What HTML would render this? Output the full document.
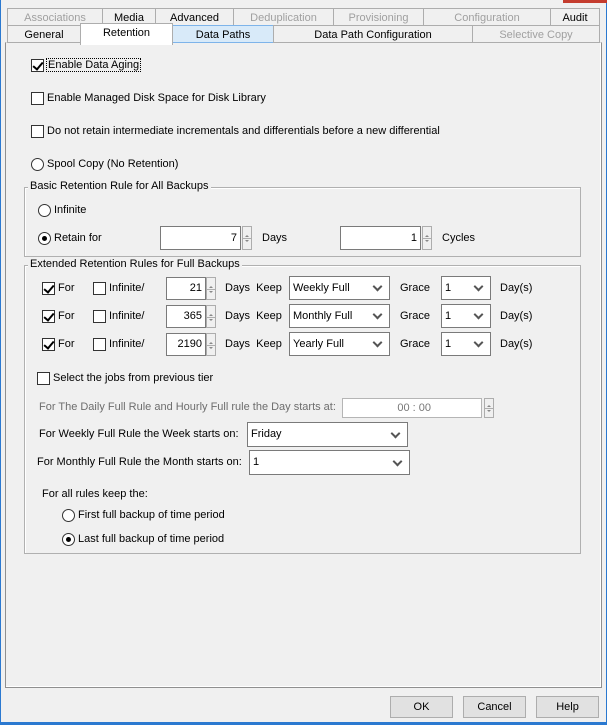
<!DOCTYPE html>
<html><head><style>
*{box-sizing:border-box;margin:0;padding:0}
body{width:607px;height:725px;background:#f0f0f0;font:11px "Liberation Sans",sans-serif;color:#000;position:relative;overflow:hidden}
.a{position:absolute;white-space:nowrap}
.tab{position:absolute;border:1px solid #adadad;background:#f0f0f0;text-align:center;height:19px;line-height:18px;font-size:11px}
.dis{color:#a0a0a0}
.cb{position:absolute;width:13px;height:13px;border:1px solid #333;background:#fff}
.cb.on::after{content:"";position:absolute;left:3px;top:0px;width:4px;height:8px;border:solid #000;border-width:0 2px 2px 0;transform:rotate(40deg)}
.rb{position:absolute;width:13px;height:13px;border:1px solid #333;border-radius:50%;background:#fff}
.rb.on::after{content:"";position:absolute;left:3px;top:3px;width:5px;height:5px;border-radius:50%;background:#000}
.box{position:absolute;border:1px solid #7a7a7a;background:#fff;text-align:right;padding-right:3px}
.sp{position:absolute;width:10px;border:1px solid #adadad;background:#f0f0f0}
.sp::before{content:"";position:absolute;left:50%;top:50%;width:0;height:0;margin-left:-2px;margin-top:-5px;border:2px solid transparent;border-bottom:2px solid #888}
.sp::after{content:"";position:absolute;left:50%;top:50%;width:0;height:0;margin-left:-2px;margin-top:2px;border:2px solid transparent;border-top:2px solid #888}
.sp i{position:absolute;left:0;right:0;top:50%;border-top:1px solid #adadad}
.cmb{position:absolute;border:1px solid #7a7a7a;background:#fff;padding-left:3px}
.cmb::after{content:"";position:absolute;right:8px;top:50%;margin-top:-5px;width:5px;height:5px;border:solid #555;border-width:0 2px 2px 0;transform:rotate(45deg)}
.grp{position:absolute;border:1px solid #b0b0b0;box-shadow:1px 1px 0 #fff inset}
.gt{position:absolute;background:#f0f0f0;padding:0 2px}
.btn{position:absolute;border:1px solid #adadad;background:#e1e1e1;text-align:center;height:22px;line-height:20px}
</style></head><body>
<div class="a" style="left:0;top:0;width:1px;height:725px;background:#2b79d0"></div>
<div class="a" style="left:0;top:722px;width:607px;height:3px;background:#2b79d0"></div>
<div class="a" style="right:0;top:0;width:1px;height:725px;background:#2b79d0"></div>
<div class="a" style="left:563px;top:0;width:44px;height:3px;background:#c43c2e"></div>
<div class="a" style="left:5px;top:42px;width:597px;height:646px;border:1px solid #8f8f8f;border-top-color:#d8d8d8;box-shadow:-1px -1px 0 #fff inset"></div>
<div class="tab dis" style="left:7px;top:8px;width:96px">Associations</div>
<div class="tab" style="left:102px;top:8px;width:54px">Media</div>
<div class="tab" style="left:155px;top:8px;width:79px">Advanced</div>
<div class="tab dis" style="left:233px;top:8px;width:101px">Deduplication</div>
<div class="tab dis" style="left:333px;top:8px;width:91px">Provisioning</div>
<div class="tab dis" style="left:423px;top:8px;width:128px">Configuration</div>
<div class="tab" style="left:550px;top:8px;width:50px">Audit</div>
<div class="tab" style="left:7px;top:25px;width:74px;height:18px">General</div>
<div class="tab" style="left:172px;top:25px;width:102px;height:18px;background:#d8eaf9;border-color:#7eb4ea">Data Paths</div>
<div class="tab" style="left:273px;top:25px;width:200px;height:18px">Data Path Configuration</div>
<div class="tab dis" style="left:472px;top:25px;width:128px;height:18px">Selective Copy</div>
<div class="tab" style="left:80px;top:23px;width:93px;height:22px;background:#fff;border-bottom:none;line-height:18px">Retention</div>

<div class="cb on" style="left:31px;top:59px"></div><div class="a" style="left:46px;top:58px;border:1px dotted #000;padding:0 1px">Enable Data Aging</div>
<div class="cb" style="left:31px;top:92px"></div><div class="a" style="left:47px;top:92px">Enable Managed Disk Space for Disk Library</div>
<div class="cb" style="left:31px;top:125px"></div><div class="a" style="left:47px;top:125px">Do not retain intermediate incrementals and differentials before a new differential</div>
<div class="rb" style="left:31px;top:158px"></div><div class="a" style="left:47px;top:158px">Spool Copy (No Retention)</div>

<div class="grp" style="left:24px;top:187px;width:557px;height:70px"></div>
<div class="gt" style="left:28px;top:180px">Basic Retention Rule for All Backups</div>
<div class="rb" style="left:38px;top:204px"></div><div class="a" style="left:54px;top:204px">Infinite</div>
<div class="rb on" style="left:38px;top:232px"></div><div class="a" style="left:54px;top:232px">Retain for</div>
<div class="box" style="left:160px;top:226px;width:81px;height:24px;line-height:22px">7</div>
<div class="sp" style="left:242px;top:226px;height:24px"><i></i></div>
<div class="a" style="left:262px;top:232px">Days</div>
<div class="box" style="left:340px;top:226px;width:81px;height:24px;line-height:22px">1</div>
<div class="sp" style="left:422px;top:226px;height:24px"><i></i></div>
<div class="a" style="left:442px;top:232px">Cycles</div>

<div class="grp" style="left:24px;top:265px;width:557px;height:289px"></div>
<div class="gt" style="left:28px;top:258px">Extended Retention Rules for Full Backups</div>

<div class="cb on" style="left:42px;top:282px"></div><div class="a" style="left:58px;top:282px">For</div>
<div class="cb" style="left:93px;top:282px"></div><div class="a" style="left:109px;top:282px">Infinite/</div>
<div class="box" style="left:166px;top:277px;width:40px;height:23px;line-height:21px">21</div><div class="sp" style="left:206px;top:277px;height:23px"><i></i></div>
<div class="a" style="left:225px;top:282px">Days&nbsp; Keep</div>
<div class="cmb" style="left:289px;top:276px;width:101px;height:24px;line-height:22px">Weekly Full</div>
<div class="a" style="left:400px;top:282px">Grace</div>
<div class="cmb" style="left:441px;top:276px;width:50px;height:24px;line-height:22px">1</div>
<div class="a" style="left:500px;top:282px">Day(s)</div>

<div class="cb on" style="left:42px;top:310px"></div><div class="a" style="left:58px;top:310px">For</div>
<div class="cb" style="left:93px;top:310px"></div><div class="a" style="left:109px;top:310px">Infinite/</div>
<div class="box" style="left:166px;top:305px;width:40px;height:23px;line-height:21px">365</div><div class="sp" style="left:206px;top:305px;height:23px"><i></i></div>
<div class="a" style="left:225px;top:310px">Days&nbsp; Keep</div>
<div class="cmb" style="left:289px;top:304px;width:101px;height:24px;line-height:22px">Monthly Full</div>
<div class="a" style="left:400px;top:310px">Grace</div>
<div class="cmb" style="left:441px;top:304px;width:50px;height:24px;line-height:22px">1</div>
<div class="a" style="left:500px;top:310px">Day(s)</div>

<div class="cb on" style="left:42px;top:338px"></div><div class="a" style="left:58px;top:338px">For</div>
<div class="cb" style="left:93px;top:338px"></div><div class="a" style="left:109px;top:338px">Infinite/</div>
<div class="box" style="left:166px;top:333px;width:40px;height:23px;line-height:21px">2190</div><div class="sp" style="left:206px;top:333px;height:23px"><i></i></div>
<div class="a" style="left:225px;top:338px">Days&nbsp; Keep</div>
<div class="cmb" style="left:289px;top:332px;width:101px;height:24px;line-height:22px">Yearly Full</div>
<div class="a" style="left:400px;top:338px">Grace</div>
<div class="cmb" style="left:441px;top:332px;width:50px;height:24px;line-height:22px">1</div>
<div class="a" style="left:500px;top:338px">Day(s)</div>

<div class="cb" style="left:37px;top:372px"></div><div class="a" style="left:53px;top:372px">Select the jobs from previous tier</div>
<div class="a" style="left:39px;top:401px;color:#6d6d6d">For The Daily Full Rule and Hourly Full rule the Day starts at:</div>
<div class="box" style="left:342px;top:398px;width:140px;height:20px;line-height:18px;border-color:#b5b5b5;color:#777;padding-right:50px">00 : 00</div>
<div class="sp" style="left:484px;top:398px;height:20px"><i></i></div>
<div class="a" style="left:39px;top:428px">For Weekly Full Rule the Week starts on:</div>
<div class="cmb" style="left:247px;top:422px;width:161px;height:25px;line-height:23px">Friday</div>
<div class="a" style="left:37px;top:456px">For Monthly Full Rule the Month starts on:</div>
<div class="cmb" style="left:249px;top:450px;width:161px;height:25px;line-height:23px">1</div>
<div class="a" style="left:42px;top:488px">For all rules keep the:</div>
<div class="rb" style="left:62px;top:509px"></div><div class="a" style="left:78px;top:509px">First full backup of time period</div>
<div class="rb on" style="left:62px;top:533px"></div><div class="a" style="left:78px;top:533px">Last full backup of time period</div>

<div class="btn" style="left:390px;top:696px;width:63px">OK</div>
<div class="btn" style="left:463px;top:696px;width:63px">Cancel</div>
<div class="btn" style="left:536px;top:696px;width:63px">Help</div>
</body></html>
